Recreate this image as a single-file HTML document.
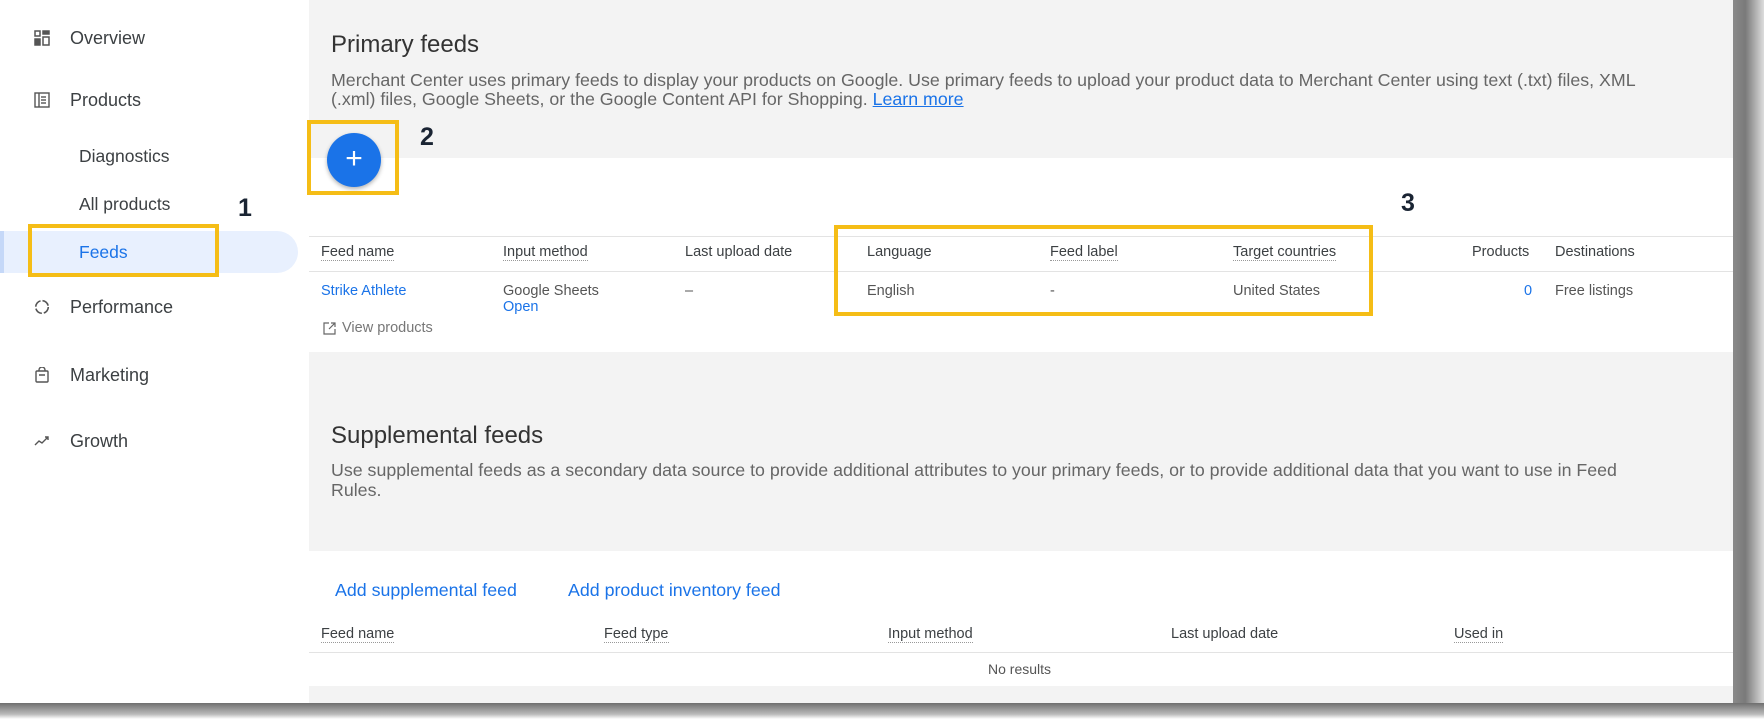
<!DOCTYPE html>
<html><head><meta charset="utf-8"><style>
*{margin:0;padding:0;box-sizing:border-box}
body{width:1764px;height:719px;overflow:hidden;background:#fff;font-family:"Liberation Sans",Arial,sans-serif;position:relative;color:#3c4043}
.a{position:absolute;white-space:nowrap}
.side{left:0;top:0;width:309px;height:703px;background:#fff}
.main{left:309px;top:0;width:1424px;height:703px;background:#f3f3f3}
.shr{left:1733px;top:0;width:31px;height:719px;background:linear-gradient(90deg,#8a8a8a,#7a7a7a 40%,#ddd)}
.shb{left:0;top:703px;width:1764px;height:16px;background:linear-gradient(#6f6f6f,#bbb 70%,#fff)}
.nav{font-size:18px;color:#3c4043;left:70px}
.sub{font-size:17.5px;color:#3c4043;left:79px}
.yb{position:absolute;border:4px solid #f5bd16}
.num{font-size:25px;font-weight:bold;color:#1a2433}
.card{background:#fff;left:309px;width:1424px}
.th{font-size:14.5px;color:#3c4043;border-bottom:1px dotted #999}
.td{font-size:14.5px;color:#555}
.lk{color:#1a73e8}
.line{height:1px;background:#e3e3e3;left:309px;width:1424px}
</style></head><body>
<div class="a side"></div>
<div class="a main"></div>
<div class="a shr"></div>
<div class="a shb"></div>

<!-- sidebar -->
<svg class="a" style="left:34px;top:30px" width="16" height="16" viewBox="0 0 16 16" fill="none" stroke="#555" stroke-width="1.5"><rect x="1" y="1" width="5" height="5"/><rect x="9" y="1" width="6" height="3" fill="#555"/><rect x="1" y="9" width="5" height="6" fill="#555"/><rect x="9" y="7" width="6" height="8"/></svg>
<div class="a nav" style="top:28px">Overview</div>
<svg class="a" style="left:34px;top:92px" width="16" height="16" viewBox="0 0 16 16" fill="none" stroke="#555" stroke-width="1.4"><rect x="1" y="1" width="14" height="14"/><line x1="5" y1="1" x2="5" y2="15"/><line x1="7" y1="5" x2="12" y2="5"/><line x1="7" y1="8" x2="12" y2="8"/><line x1="7" y1="11" x2="12" y2="11"/></svg>
<div class="a nav" style="top:90px">Products</div>
<div class="a sub" style="top:146px">Diagnostics</div>
<div class="a sub" style="top:194px">All products</div>
<div class="a" style="left:0;top:231px;width:298px;height:42px;background:#e8f0fe;border-radius:0 21px 21px 0"></div>
<div class="a" style="left:0;top:231px;width:4px;height:42px;background:#c5d8f8"></div>
<div class="a sub" style="top:242px;color:#1a73e8">Feeds</div>
<div class="yb" style="left:28px;top:224px;width:191px;height:53px"></div>
<div class="a num" style="left:238px;top:194px">1</div>
<svg class="a" style="left:34px;top:299px" width="16" height="16" viewBox="0 0 16 16" fill="none" stroke="#555" stroke-width="1.6"><circle cx="8" cy="8" r="6.3" stroke-dasharray="8 2"/></svg>
<div class="a nav" style="top:297px">Performance</div>
<svg class="a" style="left:34px;top:367px" width="16" height="16" viewBox="0 0 16 16" fill="none" stroke="#555" stroke-width="1.4"><rect x="2" y="4" width="12" height="11" rx="1"/><path d="M5 4V3a3 3 0 0 1 6 0v1M5 8h6"/></svg>
<div class="a nav" style="top:365px">Marketing</div>
<svg class="a" style="left:34px;top:435px" width="16" height="12" viewBox="0 0 16 12" fill="none" stroke="#555" stroke-width="1.4"><path d="M1 10l4-4 3 2 6-6M11 2h3v3"/></svg>
<div class="a nav" style="top:431px">Growth</div>

<!-- primary -->
<div class="a" style="left:331px;top:31px;font-size:24px;color:#333">Primary feeds</div>
<div class="a" style="left:331px;top:71px;font-size:17.8px;color:#666;line-height:19px">Merchant Center uses primary feeds to display your products on Google. Use primary feeds to upload your product data to Merchant Center using text (.txt) files, XML<br>(.xml) files, Google Sheets, or the Google Content API for Shopping. <span class="lk" style="text-decoration:underline">Learn more</span></div>
<div class="a card" style="top:158px;height:194px"></div>
<div class="a" style="left:327px;top:133px;width:54px;height:54px;border-radius:50%;background:#1a73e8;box-shadow:0 2px 4px rgba(0,0,0,.3);color:#fff;font-size:30px;text-align:center;line-height:52px">+</div>
<div class="yb" style="left:307px;top:120px;width:92px;height:75px"></div>
<div class="a num" style="left:420px;top:123px">2</div>
<div class="a num" style="left:1401px;top:189px">3</div>
<div class="a line" style="top:236px"></div>
<div class="a line" style="top:271px"></div>
<div class="a th" style="left:321px;top:244px">Feed name</div>
<div class="a th" style="left:503px;top:244px">Input method</div>
<div class="a th" style="left:685px;top:244px;border:0">Last upload date</div>
<div class="a th" style="left:867px;top:244px;border:0">Language</div>
<div class="a th" style="left:1050px;top:244px">Feed label</div>
<div class="a th" style="left:1233px;top:244px">Target countries</div>
<div class="a th" style="left:1472px;top:244px;border:0">Products</div>
<div class="a th" style="left:1555px;top:244px;border:0">Destinations</div>
<div class="a td lk" style="left:321px;top:283px">Strike Athlete</div>
<div class="a td" style="left:503px;top:283px;line-height:16px">Google Sheets<br><span class="lk">Open</span></div>
<div class="a td" style="left:685px;top:283px">–</div>
<div class="a td" style="left:867px;top:283px">English</div>
<div class="a td" style="left:1050px;top:283px">-</div>
<div class="a td" style="left:1233px;top:283px">United States</div>
<div class="a td lk" style="left:1524px;top:283px">0</div>
<div class="a td" style="left:1555px;top:283px">Free listings</div>
<svg class="a" style="left:323px;top:322px" width="13" height="13" viewBox="0 0 13 13" fill="none" stroke="#666" stroke-width="1.2"><path d="M6 1H1v11h11V7M8 1h4v4M12 1L6 7"/></svg>
<div class="a td" style="left:342px;top:320px;color:#777">View products</div>
<div class="yb" style="left:834px;top:225px;width:539px;height:91px"></div>

<!-- supplemental -->
<div class="a" style="left:331px;top:422px;font-size:24px;color:#333">Supplemental feeds</div>
<div class="a" style="left:331px;top:460px;font-size:17.8px;color:#666;line-height:20px">Use supplemental feeds as a secondary data source to provide additional attributes to your primary feeds, or to provide additional data that you want to use in Feed<br>Rules.</div>
<div class="a card" style="top:551px;height:135px"></div>
<div class="a lk" style="left:335px;top:580px;font-size:17.8px">Add supplemental feed</div>
<div class="a lk" style="left:568px;top:580px;font-size:17.8px">Add product inventory feed</div>
<div class="a th" style="left:321px;top:626px">Feed name</div>
<div class="a th" style="left:604px;top:626px">Feed type</div>
<div class="a th" style="left:888px;top:626px">Input method</div>
<div class="a th" style="left:1171px;top:626px;border:0">Last upload date</div>
<div class="a th" style="left:1454px;top:626px">Used in</div>
<div class="a line" style="top:652px"></div>
<div class="a td" style="left:988px;top:661px;font-size:14px">No results</div>
</body></html>
